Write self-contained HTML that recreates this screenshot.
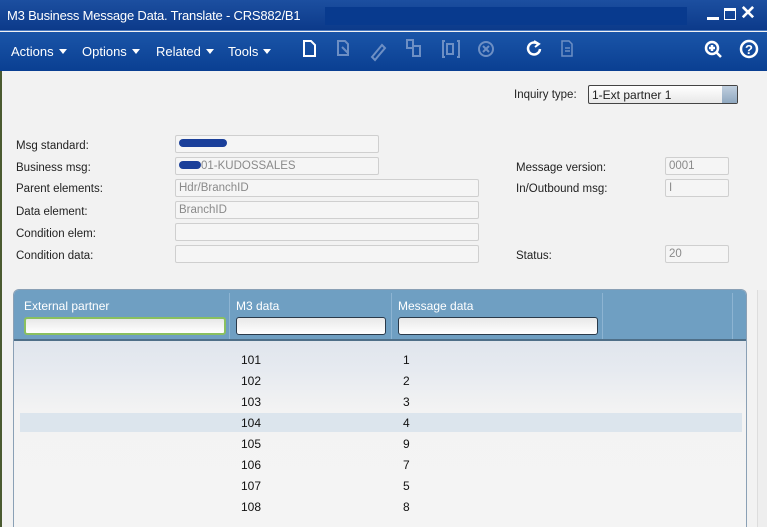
<!DOCTYPE html>
<html style="overflow:hidden;height:527px"><head><meta charset="utf-8"><style>
*{margin:0;padding:0;box-sizing:border-box}
body{width:767px;height:527px;overflow:hidden;font-family:"Liberation Sans",sans-serif;font-size:11.5px;background:#f2f2f2;position:relative;color:#222}
.abs{position:absolute}
#title{left:0;top:0;width:767px;height:31px;background:linear-gradient(#1c4fa0,#0c3a8a);border-bottom:1px solid #4a7ac0}
#title .t{left:7px;top:8px;color:#fff;font-size:13px;letter-spacing:-0.2px}
#title .bar{left:325px;top:7px;width:362px;height:18px;background:#083a8e}
#tb{left:0;top:32px;width:767px;height:39px;background:linear-gradient(#1a55a8,#0a3f92)}
.menu{top:12px;color:#fff;font-size:13px}
.menu:after{content:"";display:inline-block;margin-left:5px;border:4px solid transparent;border-top:5px solid #fff;border-bottom:0;vertical-align:2px}
#left{left:0;top:71px;width:2px;height:456px;background:#4a5a30}
.lbl{color:#222;font-size:11.5px}
.fld{background:#f5f5f5;border:1px solid #cfcfcf;border-radius:2px;height:18px;color:#8a8a8a;font-size:11.5px;padding:2px 3px;line-height:13px}
#grid{left:13px;top:289px;width:734px;height:238px;border:1px solid #8aa0b5;border-bottom:0;border-radius:6px 6px 0 0;background:linear-gradient(#d6dee8 0px,#e6eaf0 80px,#f3f3f3 120px,#f4f4f4)}
#gh{left:0;top:0;width:732px;height:51px;background:#6f9fc2;border-bottom:2px solid #4f6f88;border-radius:5px 5px 0 0}
.ch{top:9px;color:#fff;font-size:12px}
.cin{top:27px;height:18px;background:linear-gradient(#e8e8e8,#fff);border:1px solid #2a3a4a;border-radius:3px}
.sep{top:3px;width:1px;height:46px;background:#8db4d2}
.r{font-size:12px;color:#111}
</style></head><body>
<div id="title" class="abs"><div class="t abs">M3 Business Message Data. Translate - CRS882/B1</div><div class="bar abs"></div>
<div class="abs" style="left:707px;top:17px;width:12px;height:3px;background:#fff"></div>
<div class="abs" style="left:724px;top:8px;width:12px;height:12px;border:1.5px solid #fff;border-top-width:3px"></div>
<div class="abs" style="left:740px;top:2px;color:#fff;font-size:19px;font-weight:bold">✕</div></div>
<div id="tb" class="abs">
<div class="menu abs" style="left:11px">Actions</div>
<div class="menu abs" style="left:82px">Options</div>
<div class="menu abs" style="left:156px">Related</div>
<div class="menu abs" style="left:228px">Tools</div>
<svg class="abs" style="left:290px;top:0" width="300" height="39" fill="none" stroke-width="2">
<path d="M14 9h7l4 4v11H14z" stroke="#fff"/>
<path d="M48 9h7l3 3v11H48z" stroke="#6d8fc4"/><path d="M52 15l6 6" stroke="#6d8fc4"/>
<path d="M82 25l10-12 3 3-10 12z" stroke="#6d8fc4"/>
<path d="M117 8h6v8h-6zM123 14h7v10h-7z" stroke="#6d8fc4"/>
<path d="M155 9h-2v16h2M167 9h2v16h-2M157 12h6v10h-6z" stroke="#6d8fc4"/>
<circle cx="196" cy="17" r="7" stroke="#6d8fc4"/><path d="M193 14l6 6M199 14l-6 6" stroke="#6d8fc4"/>
<path d="M248 12a6 6 0 1 0 2 5" stroke="#fff" stroke-width="2.5"/><path d="M244 9l5 3-4 3" stroke="#fff"/>
<path d="M272 9h7l3 3v12h-10zM275 16h5M275 19h5" stroke="#6d8fc4" stroke-width="1.5"/>
</svg>
<svg class="abs" style="left:700px;top:5px" width="67" height="30" fill="none" stroke="#fff" stroke-width="2.5">
<circle cx="12" cy="11" r="6"/><path d="M16 15l5 5M9 11h6M12 8v6"/>
<circle cx="49" cy="12" r="8"/><text x="45" y="17" fill="#fff" stroke="none" font-size="13" font-weight="bold" font-family="Liberation Sans">?</text>
</svg></div>
<div id="left" class="abs"></div>
<div class="abs" style="left:757px;top:290px;width:10px;height:237px;background:#eee;border-left:1px solid #ddd"></div>

<div class="abs lbl" style="left:514px;top:89px">Inquiry type:</div>
<div class="abs" style="left:588px;top:85px;width:150px;height:19px;background:linear-gradient(#fff,#e8e8e8);border:1px solid #444;border-radius:2px;font-size:12px;padding:2px 3px">1-Ext partner 1</div>
<div class="abs" style="left:722px;top:86px;width:15px;height:17px;background:linear-gradient(#c0cfdf,#90a8c0)"></div>

<div class="abs lbl" style="left:16px;top:140px">Msg standard:</div>
<div class="abs lbl" style="left:16px;top:162px">Business msg:</div>
<div class="abs lbl" style="left:16px;top:183px">Parent elements:</div>
<div class="abs lbl" style="left:16px;top:206px">Data element:</div>
<div class="abs lbl" style="left:16px;top:228px">Condition elem:</div>
<div class="abs lbl" style="left:16px;top:250px">Condition data:</div>
<div class="abs fld" style="left:175px;top:135px;width:204px"><span style="display:inline-block;width:48px;height:8px;background:#1a3f9a;border-radius:4px"></span></div>
<div class="abs fld" style="left:175px;top:157px;width:204px"><span style="display:inline-block;width:22px;height:8px;background:#1a3f9a;border-radius:4px"></span>01-KUDOSSALES</div>
<div class="abs fld" style="left:175px;top:179px;width:304px">Hdr/BranchID</div>
<div class="abs fld" style="left:175px;top:201px;width:304px">BranchID</div>
<div class="abs fld" style="left:175px;top:223px;width:304px"></div>
<div class="abs fld" style="left:175px;top:245px;width:304px"></div>
<div class="abs lbl" style="left:516px;top:162px">Message version:</div>
<div class="abs lbl" style="left:516px;top:183px">In/Outbound msg:</div>
<div class="abs lbl" style="left:516px;top:250px">Status:</div>
<div class="abs fld" style="left:665px;top:157px;width:64px">0001</div>
<div class="abs fld" style="left:665px;top:179px;width:64px">I</div>
<div class="abs fld" style="left:665px;top:245px;width:64px">20</div>

<div id="grid" class="abs">
<div id="gh" class="abs">
<div class="ch abs" style="left:10px">External partner</div>
<div class="ch abs" style="left:222px">M3 data</div>
<div class="ch abs" style="left:384px">Message data</div>
<div class="sep abs" style="left:215px"></div><div class="sep abs" style="left:377px"></div><div class="sep abs" style="left:588px"></div><div class="sep abs" style="left:718px"></div>
<div class="cin abs" style="left:10px;width:202px;border:2px solid #8ac060"></div>
<div class="cin abs" style="left:222px;width:150px"></div>
<div class="cin abs" style="left:384px;width:200px"></div>
</div>
<div class="abs" style="left:6px;top:123px;width:722px;height:19px;background:#dce5ed"></div>
<div class="abs r" style="left:227px;top:60px;line-height:21px">101<br>102<br>103<br>104<br>105<br>106<br>107<br>108</div>
<div class="abs r" style="left:389px;top:60px;line-height:21px">1<br>2<br>3<br>4<br>9<br>7<br>5<br>8</div>
</div>
</body></html>
